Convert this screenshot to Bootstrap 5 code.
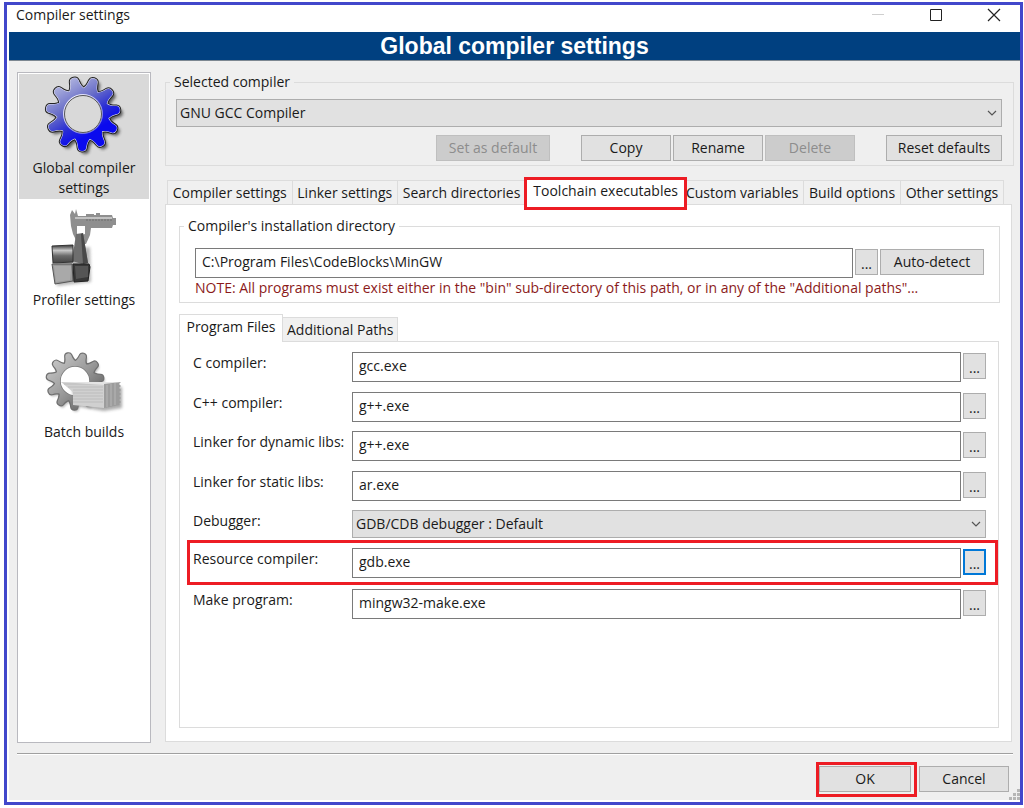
<!DOCTYPE html>
<html lang="en">
<head>
<meta charset="utf-8">
<meta name="viewport" content="width=device-width, initial-scale=1">
<title>Compiler settings</title>
<link href="https://cdn.jsdelivr.net/npm/bootstrap@5.3.0/dist/css/bootstrap.min.css" rel="stylesheet">
<style>
body{font-family:"Open Sans","Noto Sans",sans-serif;font-size:14px;line-height:20px;color:#1a1a1a;background:#fff}
.page-pad{padding:2px 1px 3px 4px}
.dialog-win{border:3px solid #4147cb;background:#fff}
.title-bar{height:27px;padding:0 19px 7px 9px}
.win-btn{border:0;background:none;padding:0;line-height:0}
.dialog-body{background:#efefef;margin-left:2px;margin-bottom:2px}
.banner{background:#004080;color:#fff;font:bold 23px/28px "Liberation Sans",sans-serif;margin:0;border-bottom:1px solid #7c8791;height:29px;text-align:center}
.work-area{padding:11px 6px 10px 8px;gap:14px}
.side-list{width:134px;border:1px solid #b9b9bf;background:#fff;padding:1px}
.side-item{color:#1a1a1a;text-decoration:none;text-align:center;height:132px;padding:0 8px;display:flex;flex-direction:column;align-items:center}
.side-item.chosen{background:#d9d9d9;height:125px;margin-bottom:7px}
.side-item svg{flex:none}
.group-box{border:1px solid #dcdcdc;position:relative}
.group-title{position:absolute;top:-11px;left:4px;padding:0 4px;line-height:20px}
.on-grey{background:#efefef}
.on-white{background:#fff}
.selected-box{margin-top:10px;height:84px;padding:16px 11px 0 10px}
.win-select{appearance:none;border:1px solid #adadad;border-radius:0;background:#e1e1e1;color:#1a1a1a;width:100%;height:28px;padding:0 3px;font-size:14px;line-height:20px}
.select-wrap{position:relative}
.select-wrap svg{position:absolute;right:5px;top:10px;pointer-events:none}
.win-btn-face{border:1px solid #adadad;background:#e1e1e1;color:#1a1a1a;height:26px;padding:0;font-size:14px;line-height:20px;border-radius:0;width:90px}
.win-btn-face:disabled{background:#cccccc;border-color:#bfbfbf;color:#8d8d8d}
.default-btn{width:114px;margin-right:29px}
.reset-btn{width:116px;margin-left:29px}
.auto-btn{width:104px;margin-top:1px}
.dots-btn{width:23px;margin-top:1px;padding-top:3px}
.dots-btn.focused{border:2px solid #0078d7}
.tab-row{height:24px;margin:14px 10px 0 2px}
.tab-btn{border:1px solid #dcdcdc;border-left-width:0;border-bottom:0;background:#f0f0f0;color:#1a1a1a;padding:0 5px;height:24px;line-height:24px;white-space:nowrap}
.tab-btn:first-child{border-left-width:1px}
.top-tab{flex:1 1 auto;padding:0}
.tab-btn.current{background:#fff}
.top-tab.current{border:3px solid #ed1c24;height:33px;line-height:20px;align-self:flex-end;margin:0 -6px -6px -2px;flex:none;width:163px;padding-bottom:6px;z-index:1}
.tab-page{border:1px solid #dcdcdc;background:#fff}
.outer-page{padding:21px 11px 13px 13px;margin:0 2px 1px 0}
.win-input{border:1px solid #7a7a7a;border-radius:0;background:#fff;color:#1a1a1a;height:30px;padding:0 6px 3px;line-height:20px;flex:1 1 0;min-width:0}
.install-box{height:77px;padding:21px 15px 0}
.note-text{color:#8b1a1a;line-height:20px;white-space:nowrap;margin:0}
.inner-tabs{margin-top:11px;height:27px}
.inner-tabs .current{height:28px;line-height:22px;padding-bottom:3px;margin-bottom:-1px;z-index:1;width:104px}
.inner-tabs .tab-btn+.tab-btn{padding:0 4px}
.inner-page{padding:4px 0 0 7px;margin-right:1px}
.field-row{height:39px;padding:6px 12px 3px 6px;gap:2px}
.field-row:nth-child(odd){height:40px}
.field-row label{width:157px;flex:none;line-height:22px}
.field-row.marked{border:3px solid #ed1c24;height:45px;margin:-4px 0 -2px;padding:5px 9px 4px 3px}
.dialog-foot{margin:0 7px 0 8px;border-top:1px solid #a0a0a0;box-shadow:inset 0 1px #fff;height:47px;padding:8px 4px 0 0}
.ok-mark{border:3px solid #ed1c24;height:35px;width:101px;padding:1px 3px 0 0}
.ok-mark .win-btn-face{width:92px}
.cancel-btn{margin:4px 0 0 2px}
.size-grip{position:absolute;right:0;bottom:2px}
</style>
</head>
<body>
<div class="page-pad min-vh-100 d-flex">
<div class="dialog-win flex-fill d-flex flex-column position-relative">
  <header class="title-bar d-flex align-items-center">
    <span class="me-auto">Compiler settings</span>
    <div class="d-flex" style="gap:44px">
      <button class="win-btn" aria-label="Minimize" disabled><svg width="14" height="14"><path d="M1 6.500h12" stroke="#cfcfcf"/></svg></button>
      <button class="win-btn" aria-label="Maximize"><svg width="14" height="14"><path d="M1.500 1.500h11v11h-11z" fill="none" stroke="#222"/></svg></button>
      <button class="win-btn" aria-label="Close"><svg width="14" height="14"><path d="M1 1l12 12M13 1L1 13" stroke="#222" stroke-width="1.200"/></svg></button>
    </div>
  </header>
  <div class="dialog-body flex-fill d-flex flex-column">
    <h1 class="banner">Global compiler settings</h1>
    <div class="work-area d-flex flex-fill">
      <nav class="side-list">
        <a href="#" class="side-item chosen">
          <svg width="90" height="84" viewBox="-44 -40 90 84">
            <defs>
              <path id="tooth" d="M-10-22C-5-26-4.500-30-4-34Q-3.500-37-0-37T4-34C4.500-30 5-26 10-22Z"/>
              <g id="gear"><circle r="25"/>
                <use href="#tooth" transform="rotate(-15)"/><use href="#tooth" transform="rotate(17.700)"/><use href="#tooth" transform="rotate(50.500)"/><use href="#tooth" transform="rotate(83.200)"/><use href="#tooth" transform="rotate(116)"/><use href="#tooth" transform="rotate(148.600)"/><use href="#tooth" transform="rotate(181.400)"/><use href="#tooth" transform="rotate(214)"/><use href="#tooth" transform="rotate(246.800)"/><use href="#tooth" transform="rotate(279.500)"/><use href="#tooth" transform="rotate(312.300)"/></g>
              <mask id="hole"><rect x="-50" y="-50" width="100" height="100" fill="#fff"/><circle r="18.500" fill="#000"/></mask>
              <mask id="gearMask"><use href="#gear" fill="#fff"/><circle r="19.500" fill="#000"/></mask>
              <linearGradient id="blueFill" x1=".2" y1="0" x2=".8" y2="1"><stop offset=".08" stop-color="#b4b8e0"/><stop offset=".36" stop-color="#6a6fc8"/><stop offset=".55" stop-color="#2a2ed4"/><stop offset=".72" stop-color="#0a0aee"/></linearGradient>
              <linearGradient id="rimFill" gradientUnits="userSpaceOnUse" x1="-25" y1="-30" x2="25" y2="30"><stop offset=".2" stop-color="#fff"/><stop offset=".8" stop-color="#5a5ae0"/></linearGradient>
              <linearGradient id="greyFill" x1="0" y1="0" x2="1" y2="1"><stop offset=".15" stop-color="#c4c4c4"/><stop offset=".5" stop-color="#9a9a9a"/><stop offset=".85" stop-color="#606060"/></linearGradient>
              <filter id="soft" x="-30%" y="-30%" width="160%" height="160%"><feGaussianBlur stdDeviation="1.500"/></filter>
            </defs>
            <g mask="url(#hole)"><use href="#gear" x="3" y="3" fill="#333" opacity=".75" filter="url(#soft)"/>
            <use href="#gear" fill="#222" stroke="#222" stroke-width="3"/><use href="#gear" fill="#dcdcf0" stroke="#dcdcf0" stroke-width="1"/></g>
            <rect x="-40" y="-40" width="80" height="80" fill="url(#blueFill)" mask="url(#gearMask)"/>
            <circle r="19.500" fill="none" stroke="url(#rimFill)"/>
            <circle r="18.500" fill="none" stroke="#333" stroke-width=".8"/>
          </svg>
          <span>Global compiler settings</span>
        </a>
        <a href="#" class="side-item">
          <svg width="90" height="84" viewBox="39 205 90 84">
            <defs><linearGradient id="cubeFill" x1="0" y1="0" x2="0" y2="1"><stop offset="0" stop-color="#333"/><stop offset=".3" stop-color="#c8c8c8"/><stop offset=".6" stop-color="#6a6a6a"/><stop offset="1" stop-color="#444"/></linearGradient></defs>
            <path d="M54 248h20l16-2 1 35-34 4z" fill="#888" opacity=".6" filter="url(#soft)"/>
            <path fill-rule="evenodd" d="M70 214l2-5 3 4 1-5 2 7h8v-2h8v1h2v-2h4v2h12l1 3h3v7h-3l-1 3H91l-1 7-4 9h-4l-1-6-4 4-4-8-2-8zM77 225v10l8-2v-8z" fill="#8f8f8f"/>
            <path d="M75 217h37" stroke="#c2c2c2" stroke-width="2"/><path d="M86 219h26" stroke="#6f6f6f" stroke-dasharray="2 1"/>
            <path d="M76 233l7-1 5 30-6 1-10-3z" fill="#6e6e6e"/><path d="M83 232l5 30-5 1-2-30z" fill="#494949"/>
            <path d="M52 245l21-1v17l-20 1z" fill="url(#cubeFill)" stroke="#333"/>
            <path d="M52 263h20l1 17-18 3z" fill="#999" stroke="#555"/><path d="M54 265h17v3l-1 11-14 2z" fill="#a9a9a9"/>
            <path d="M73 263h16l1 3-2 14-14 1z" fill="#383838" stroke="#222"/><path d="M75 265h13v11l-12 2z" fill="#555"/>
          </svg>
          <span>Profiler settings</span>
        </a>
        <a href="#" class="side-item">
          <svg width="90" height="84" viewBox="39 337 90 84">
            <g transform="translate(75 380) scale(.77)"><g mask="url(#hole)"><use href="#gear" x="2" y="3" fill="#777" opacity=".5" filter="url(#soft)"/><use href="#gear" fill="#777" stroke="#707070" stroke-width="3"/></g><rect x="-40" y="-40" width="80" height="80" fill="url(#greyFill)" mask="url(#gearMask)"/></g>
            <path d="M72 386h50v21l-18 3-29-5z" fill="#888" opacity=".7" filter="url(#soft)"/>
            <path d="M61 381h43v26l-31-3v-13z" fill="#d0d0d0"/><path d="M64 383h39M68 386h35M73 389h30M73 392h30M73 395h30M73 398h30M73 401h30" stroke="#bcbcbc"/><path d="M61 381h59l-16 3z" fill="#e4e4e4"/>
            <path d="M104 383l17-2-2 2 2 2-2 2 2 2-2 2 2 2-2 2 2 2-2 2 2 2-2 2 1 1-16 3z" fill="#9c9c9c"/><path d="M107 384v22M111 383v22M115 382v22" stroke="#b6b6b6"/>
          </svg>
          <span>Batch builds</span>
        </a>
      </nav>
      <main class="flex-fill d-flex flex-column">
        <section class="group-box selected-box">
          <label class="group-title on-grey" for="compiler">Selected compiler</label>
          <div class="select-wrap"><select id="compiler" class="win-select"><option>GNU GCC Compiler</option></select><svg width="10" height="8"><path d="M1 2l4 4 4-4" fill="none" stroke="#555" stroke-width="1.200"/></svg></div>
          <div class="d-flex justify-content-end mt-2" style="gap:2px">
            <button class="win-btn-face default-btn" disabled>Set as default</button>
            <button class="win-btn-face">Copy</button>
            <button class="win-btn-face">Rename</button>
            <button class="win-btn-face" disabled>Delete</button>
            <button class="win-btn-face reset-btn">Reset defaults</button>
          </div>
        </section>
        <div class="tab-row d-flex" role="tablist">
          <button class="tab-btn top-tab" role="tab">Compiler settings</button>
          <button class="tab-btn top-tab" role="tab">Linker settings</button>
          <button class="tab-btn top-tab" role="tab">Search directories</button>
          <button class="tab-btn top-tab current" role="tab" aria-selected="true">Toolchain executables</button>
          <button class="tab-btn top-tab" role="tab">Custom variables</button>
          <button class="tab-btn top-tab" role="tab">Build options</button>
          <button class="tab-btn top-tab" role="tab">Other settings</button>
        </div>
        <section class="tab-page outer-page flex-fill d-flex flex-column">
          <div class="group-box install-box">
            <label class="group-title on-white" for="installDir">Compiler's installation directory</label>
            <div class="d-flex" style="gap:2px">
              <input id="installDir" class="win-input" value="C:\Program Files\CodeBlocks\MinGW">
              <button class="win-btn-face dots-btn">...</button>
              <button class="win-btn-face auto-btn">Auto-detect</button>
            </div>
            <p class="note-text">NOTE: All programs must exist either in the "bin" sub-directory of this path, or in any of the "Additional paths"...</p>
          </div>
          <div class="inner-tabs d-flex align-items-end" role="tablist">
            <button class="tab-btn current" role="tab" aria-selected="true">Program Files</button>
            <button class="tab-btn" role="tab">Additional Paths</button>
          </div>
          <div class="tab-page inner-page flex-fill">
            <div class="field-row d-flex"><label for="f1">C compiler:</label><input id="f1" class="win-input" value="gcc.exe"><button class="win-btn-face dots-btn">...</button></div>
            <div class="field-row d-flex"><label for="f2">C++ compiler:</label><input id="f2" class="win-input" value="g++.exe"><button class="win-btn-face dots-btn">...</button></div>
            <div class="field-row d-flex"><label for="f3">Linker for dynamic libs:</label><input id="f3" class="win-input" value="g++.exe"><button class="win-btn-face dots-btn">...</button></div>
            <div class="field-row d-flex"><label for="f4">Linker for static libs:</label><input id="f4" class="win-input" value="ar.exe"><button class="win-btn-face dots-btn">...</button></div>
            <div class="field-row d-flex"><label for="f5">Debugger:</label><div class="select-wrap flex-fill"><select id="f5" class="win-select"><option>GDB/CDB debugger : Default</option></select><svg width="10" height="8"><path d="M1 2l4 4 4-4" fill="none" stroke="#555" stroke-width="1.200"/></svg></div></div>
            <div class="field-row marked d-flex"><label for="f6">Resource compiler:</label><input id="f6" class="win-input" value="gdb.exe"><button class="win-btn-face dots-btn focused">...</button></div>
            <div class="field-row d-flex"><label for="f7">Make program:</label><input id="f7" class="win-input" value="mingw32-make.exe"><button class="win-btn-face dots-btn">...</button></div>
          </div>
        </section>
      </main>
    </div>
    <footer class="dialog-foot d-flex justify-content-end">
      <div class="ok-mark"><button class="win-btn-face">OK</button></div>
      <button class="win-btn-face cancel-btn">Cancel</button>
    </footer>
  </div>
  <svg class="size-grip" width="11" height="11" fill="#b5b5b5"><path d="M8 0h3v3h-3zM8 4h3v3h-3zM8 8h3v3h-3zM4 4h3v3h-3zM4 8h3v3h-3zM0 8h3v3h-3z"/></svg>
</div>
</div>
<script src="https://cdn.jsdelivr.net/npm/bootstrap@5.3.0/dist/js/bootstrap.bundle.min.js"></script>
</body>
</html>
